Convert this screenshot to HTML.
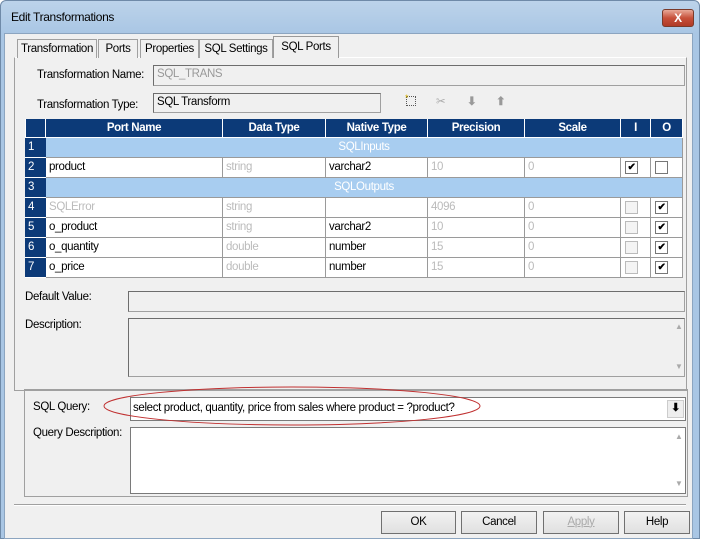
<!DOCTYPE html>
<html><head><style>
*{box-sizing:border-box;margin:0;padding:0}
body{width:705px;height:539px;background:#fff;position:relative;overflow:hidden;font-family:"Liberation Sans",sans-serif;font-size:11.5px;color:#000;letter-spacing:-0.35px}
.a{position:absolute}
.win{left:0;top:0;width:700px;height:539px;background:linear-gradient(#bcd3ea,#a9c6e4 33px,#a9c6e4);border:1px solid #6f8aa8;border-radius:6px 6px 0 0}
.body{left:4px;top:33px;width:689px;height:506px;background:#f0f0f0;border:1px solid #8ca5c0}
.box{background:#f0f0f0;border:1px solid #a0a0a0;border-top-color:#6d6d6d;border-left-color:#6d6d6d}
.wbox{background:#fff;border:1px solid #7a7a7a}
.tab{top:39px;height:19px;border:1px solid #a0a0a0;border-bottom:none;background:#f0f0f0;padding-top:3px;text-align:center;white-space:nowrap}
.btn{top:511px;height:23px;border:1px solid #707070;background:linear-gradient(#f2f2f2,#e0e0e0);text-align:center;line-height:21px}
table{position:absolute;left:25px;top:119px;border-collapse:collapse;width:658px;table-layout:fixed}
td{height:20px;border:1px solid #9a9a9a;padding:0 3px;white-space:nowrap;background:#fff}
th{height:18px;background:#0c3a78;color:#fff;font-weight:bold;border:1px solid #fff;border-top:none}
td.n{background:#0c3a78;color:#fff;padding:0 2px;border:1px solid #0c3a78;border-bottom-color:#fff}
td.g{background:#a8cdf0;color:#fff;text-align:center}
.gr{color:#bbb}
.cb{display:inline-block;width:13px;height:13px;border:1px solid #777;background:#fff;vertical-align:middle;font-size:10px;line-height:11px;text-align:center;font-weight:bold;margin-left:1px}
.cb.d{border-color:#bbb;background:#f4f4f4}
</style></head><body>
<div class="a win"></div>
<div class="a" style="left:11px;top:10px;font-size:12px">Edit Transformations</div>
<div class="a" style="left:662px;top:9px;width:32px;height:18px;border-radius:3px;border:1px solid #7a3a2a;background:linear-gradient(#e8a898,#c7503a 50%,#b03a26);color:#fff;text-align:center;font-weight:bold;font-size:12px;line-height:16px">X</div>
<div class="a body"></div>
<div class="a" style="left:14px;top:57px;width:673px;height:334px;border:1px solid #a0a0a0;border-top-color:#fff"></div>
<div class="a tab" style="left:17px;width:80px">Transformation</div>
<div class="a tab" style="left:98px;width:40px">Ports</div>
<div class="a tab" style="left:140px;width:59px">Properties</div>
<div class="a tab" style="left:199px;width:74px">SQL Settings</div>
<div class="a tab" style="left:273px;width:66px;top:36px;height:22px;border-color:#999;padding-top:4px">SQL Ports</div>
<div class="a" style="left:37px;top:69px">Transformation Name:</div>
<div class="a box" style="left:153px;top:65px;width:532px;height:21px;padding:2px 3px;color:#999">SQL_TRANS</div>
<div class="a" style="left:37px;top:99px">Transformation Type:</div>
<div class="a box" style="left:153px;top:93px;width:228px;height:20px;padding:2px 3px">SQL Transform</div>
<div class="a" style="left:406px;top:96px;width:10px;height:10px;border:1px dotted #555"></div>
<div class="a" style="left:405px;top:93px;color:#d8b000;font-size:9px">*</div>
<div class="a" style="left:436px;top:94px;color:#aaa">✂</div>
<div class="a" style="left:467px;top:94px;color:#999;font-weight:bold">⬇</div>
<div class="a" style="left:496px;top:94px;color:#999;font-weight:bold">⬆</div>
<table>
<colgroup><col style="width:20px"><col style="width:177px"><col style="width:103px"><col style="width:102px"><col style="width:97px"><col style="width:96px"><col style="width:30px"><col></colgroup>
<tr><th></th><th>Port Name</th><th>Data Type</th><th>Native Type</th><th>Precision</th><th>Scale</th><th>I</th><th>O</th></tr>
<tr><td class="n">1</td><td class="g" colspan="7">SQLInputs</td></tr>
<tr><td class="n">2</td><td>product</td><td class="gr">string</td><td>varchar2</td><td class="gr">10</td><td class="gr">0</td><td><span class="cb">✔</span></td><td><span class="cb"></span></td></tr>
<tr><td class="n">3</td><td class="g" colspan="7">SQLOutputs</td></tr>
<tr><td class="n">4</td><td class="gr">SQLError</td><td class="gr">string</td><td></td><td class="gr">4096</td><td class="gr">0</td><td><span class="cb d"></span></td><td><span class="cb">✔</span></td></tr>
<tr><td class="n">5</td><td>o_product</td><td class="gr">string</td><td>varchar2</td><td class="gr">10</td><td class="gr">0</td><td><span class="cb d"></span></td><td><span class="cb">✔</span></td></tr>
<tr><td class="n">6</td><td>o_quantity</td><td class="gr">double</td><td>number</td><td class="gr">15</td><td class="gr">0</td><td><span class="cb d"></span></td><td><span class="cb">✔</span></td></tr>
<tr><td class="n">7</td><td>o_price</td><td class="gr">double</td><td>number</td><td class="gr">15</td><td class="gr">0</td><td><span class="cb d"></span></td><td><span class="cb">✔</span></td></tr>
</table>
<div class="a" style="left:25px;top:291px">Default Value:</div>
<div class="a box" style="left:128px;top:291px;width:557px;height:21px"></div>
<div class="a" style="left:25px;top:319px">Description:</div>
<div class="a box" style="left:128px;top:318px;width:557px;height:59px"></div>
<div class="a" style="left:675px;top:322px;color:#aaa;font-size:8px">▲</div>
<div class="a" style="left:675px;top:362px;color:#aaa;font-size:8px">▼</div>
<div class="a" style="left:24px;top:389px;width:664px;height:108px;border:1px solid #a0a0a0"></div>
<div class="a" style="left:33px;top:401px">SQL Query:</div>
<div class="a wbox" style="left:130px;top:397px;width:556px;height:24px;padding:4px 2px">select product, quantity, price from sales where product = ?product?</div>
<div class="a" style="left:667px;top:400px;width:17px;height:18px;background:#eee;border:1px solid #ccc;text-align:center;font-weight:bold;font-size:11px">⬇</div>
<div class="a" style="left:33px;top:427px">Query Description:</div>
<div class="a wbox" style="left:130px;top:427px;width:556px;height:67px"></div>
<div class="a" style="left:675px;top:432px;color:#aaa;font-size:8px">▲</div>
<div class="a" style="left:675px;top:479px;color:#aaa;font-size:8px">▼</div>
<svg class="a" style="left:100px;top:384px" width="390" height="45"><ellipse cx="192" cy="22" rx="188" ry="19" fill="none" stroke="#c03030" stroke-width="1"/></svg>
<div class="a" style="left:14px;top:504px;width:672px;height:2px;border-top:1px solid #a0a0a0;border-bottom:1px solid #fff"></div>
<div class="a btn" style="left:381px;width:75px">OK</div>
<div class="a btn" style="left:461px;width:76px">Cancel</div>
<div class="a btn" style="left:543px;width:76px;color:#aaa;text-decoration:underline;text-decoration-thickness:1px">Apply</div>
<div class="a btn" style="left:624px;width:66px">Help</div>
</body></html>
